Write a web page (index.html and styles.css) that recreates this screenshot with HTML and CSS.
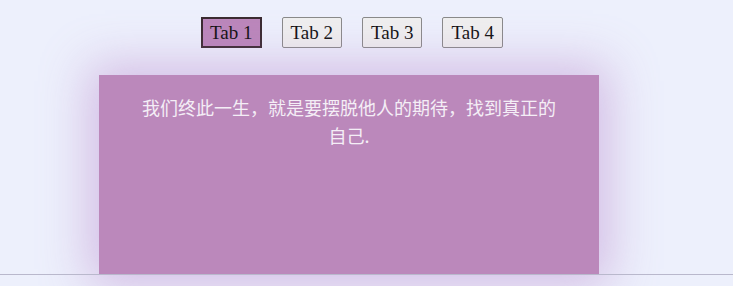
FILE: index.html
```html
<!DOCTYPE html>
<html lang="zh">
<head>
<meta charset="utf-8">
<title>Tabs</title>
<link rel="stylesheet" href="styles.css">
</head>
<body>
<div class="page">
  <div class="tabs">
    <button class="tab active">Tab 1</button>
    <button class="tab">Tab 2</button>
    <button class="tab">Tab 3</button>
    <button class="tab">Tab 4</button>
  </div>
  <div class="panel">
    <p class="quote">我们终此一生，就是要摆脱他人的期待，找到真正的自己.</p>
  </div>
</div>
<div class="baseline"></div>
</body>
</html>
```

FILE: styles.css
```css
html, body {
  margin: 0;
  padding: 0;
  height: 100%;
  overflow: hidden;
}
body {
  background: #edf0fc;
  font-family: "Liberation Serif", serif;
  position: relative;
}
.page {
  width: 500px;
  margin-left: 99px;
  padding-top: 17px;
  display: flex;
  flex-direction: column;
  align-items: center;
}
.tabs {
  display: flex;
  gap: 20px;
  margin-left: 6px;
}
.tab {
  height: 31px;
  padding: 0 8px;
  font-family: "Liberation Serif", serif;
  font-size: 19px;
  color: #111;
  background: #efefef;
  border: 1px solid #8a8a8a;
  border-radius: 2px;
  box-sizing: border-box;
}
.tab.active {
  padding: 0 7px;
  background: #bb87bb;
  border: 2px solid #3a2a30;
  border-radius: 0;
}
.panel {
  position: relative;
  z-index: 2;
  margin-top: 27px;
  width: 500px;
  height: 200px;
  box-sizing: border-box;
  padding: 18px 40px;
  background: #bb88bb;
  box-shadow: 0 0 45px 10px rgba(180, 125, 200, 0.45);
}
.quote {
  margin: 0;
  text-align: center;
  color: #f4eef6;
  font-family: "Noto Sans CJK SC", "Noto Sans", sans-serif;
  font-size: 18px;
  line-height: 28px;
}
.baseline {
  position: absolute;
  left: 0;
  right: 0;
  top: 274px;
  height: 1px;
  background: #b9b8cc;
  z-index: 3;
}
```
